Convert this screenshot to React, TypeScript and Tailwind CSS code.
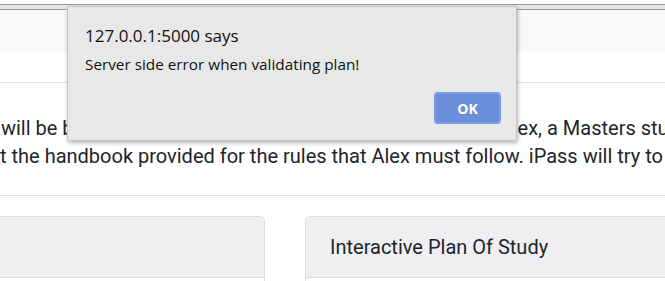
import React from 'react';

// Zero-width box whose content overflows to the left, so the start of a line is clipped
function Clipped({ children }: { children: React.ReactNode }) {
  return (
    <span className="flex w-0 shrink-0 justify-end">
      <span className="whitespace-nowrap">{children}</span>
    </span>
  );
}

export default function App() {
  return (
    <div
      className="relative h-[281px] w-full overflow-hidden bg-white text-[#212529]"
      style={{ fontFamily: 'Roboto, "Liberation Sans", sans-serif' }}
    >
      <div className="h-[4px] bg-white" />
      <div className="h-[6px] border-y border-[#9c9c9c] bg-[#e6e6e6]" />
      <div className="h-[42px] bg-[#f8f9fa]" />
      <div className="h-[30px]" />
      <div className="border-t border-[#e0e0e0]" />

      {/* intro text */}
      <div className="pt-[31px] pb-[25px] text-[20px] leading-[28px]">
        <div className="ml-[-4px] flex whitespace-nowrap">
          <Clipped>In this demo, you</Clipped>
          <span>&nbsp;will be building a plan of study for a new student named Alex, a Masters student in Computer Science.</span>
        </div>
        <div className="flex whitespace-nowrap">
          <Clipped>Please consul</Clipped>
          <span>t the handbook provided for the rules that Alex must follow. iPass will try to help.</span>
        </div>
      </div>
      <div className="border-t border-[#e0e0e0]" />

      {/* cards */}
      <div className="mt-[20px] flex gap-[40px]">
        <div className="ml-[-35px] w-[300px] shrink-0 rounded-[5px] border border-[#dcdcdc]">
          <div className="h-[61px] rounded-t-[5px] border-b border-[#dcdcdc] bg-[#efeff1]" />
          <div className="h-[40px]" />
        </div>
        <div className="w-[420px] shrink-0 rounded-[5px] border border-[#dcdcdc]">
          <div className="flex h-[61px] items-center rounded-t-[5px] border-b border-[#dcdcdc] bg-[#efeff1] px-[24px] text-[20px]">
            Interactive Plan Of Study
          </div>
          <div className="h-[40px]" />
        </div>
      </div>

      {/* alert dialog */}
      <div
        className="absolute left-[67px] top-[6px] flex h-[135px] w-[450px] flex-col rounded-[2px] border border-[#c4c4c4] bg-[#e8e8e8] px-[17px] shadow-[1px_2px_4px_rgba(0,0,0,0.3)]"
        style={{ fontFamily: '"Open Sans", "Noto Sans", sans-serif' }}
      >
        <div className="mt-[17px] text-[17px] leading-[23px] text-[#111]">127.0.0.1:5000 says</div>
        <div className="mt-[7px] text-[15.3px] leading-[21px] text-[#111]">Server side error when validating plan!</div>
        <div className="mt-[17px] flex justify-end">
          <button className="mr-[-2px] flex h-[32px] w-[67px] items-center justify-center rounded-[4px] border-2 border-[#7d9de2] bg-[#6a8ed9] text-[14px] font-bold text-white">
            OK
          </button>
        </div>
      </div>
    </div>
  );
}
